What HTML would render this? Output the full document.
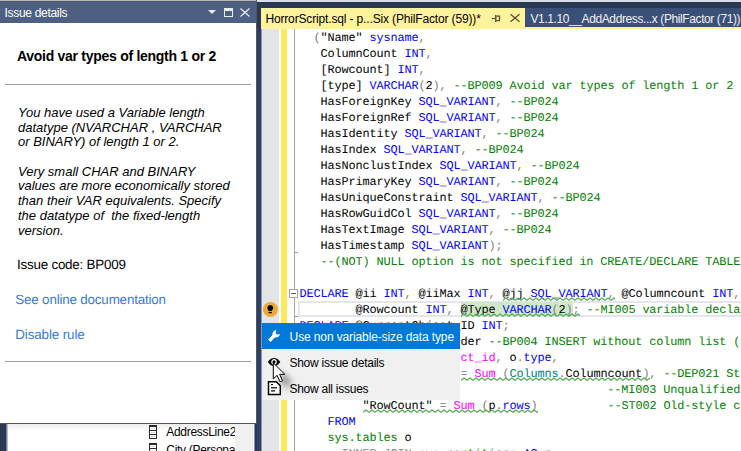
<!DOCTYPE html>
<html><head><meta charset="utf-8">
<style>
*{margin:0;padding:0;box-sizing:border-box}
html,body{width:741px;height:451px;overflow:hidden;background:#293955;position:relative;font-family:"Liberation Sans",sans-serif}
.a{position:absolute}
.code{position:absolute;left:299.6px;font-family:"Liberation Mono",monospace;font-size:11.9px;letter-spacing:-0.141px;line-height:16px;white-space:pre;color:#000;text-rendering:geometricPrecision}
.k{color:#0000ff}.g{color:#808080}.c{color:#008000}.m{color:#ff00ff}.t{color:#008080}
.pt{position:absolute;left:18px;white-space:pre;font:italic 13px/1 "Liberation Sans",sans-serif;color:#000}
.ui{position:absolute;white-space:pre;font-family:"Liberation Sans",sans-serif;line-height:1}
</style></head><body>
<!-- ===== editor ===== -->
<div class="a" style="left:257px;top:0;width:484px;height:2px;background:#d9dde8"></div>
<div class="a" style="left:261px;top:8px;width:264px;height:21px;background:#fff29d"></div>
<svg class="a" style="left:488px;top:10px" width="36" height="16" viewBox="0 0 36 16">
<path d="M3.8 8.5 H7.2" stroke="#5c5234" stroke-width="1.2"/>
<rect x="7" y="5" width="1.5" height="7" fill="#5c5234"/>
<path d="M8.3 6.2 H11.5 V10.6 H8.3" fill="none" stroke="#5c5234" stroke-width="1.3"/>
<path d="M22.5 4.3 L31.5 11.7 M31.5 4.3 L22.5 11.7" stroke="#5c5234" stroke-width="1.4"/>
</svg>
<div class="a" style="left:525px;top:8px;width:216px;height:19px;background:#3b5078"></div>
<div class="a" style="left:261px;top:27px;width:480px;height:2px;background:#fff29d"></div>
<div class="ui" style="left:265.4px;top:12.8px;font-size:12px;color:#000;letter-spacing:-0.15px">HorrorScript.sql - p...Six (PhilFactor (59))*</div>
<div class="ui" style="left:530.5px;top:13px;font-size:12px;color:#f0f0f0;letter-spacing:-0.4px">V1.1.10__AddAddress...x (PhilFactor (71))</div>
<div class="a" style="left:261px;top:29px;width:480px;height:422px;background:#fff"></div>
<div class="a" style="left:262px;top:29px;width:17px;height:422px;background:#e4e5e7"></div>
<div class="a" style="left:257px;top:29px;width:4px;height:422px;background:#2f4062"></div>
<div class="a" style="left:261px;top:29px;width:1px;height:422px;background:#8797b6"></div>
<div class="a" style="left:281px;top:29px;width:5.6px;height:422px;background:#ffe85a"></div>
<!-- outline -->
<div class="a" style="left:294px;top:29px;width:1px;height:260px;background:#a5a5a5"></div>
<div class="a" style="left:294px;top:252px;width:4px;height:1px;background:#a5a5a5"></div>
<div class="a" style="left:289px;top:289px;width:9px;height:9px;border:1px solid #a5a5a5;background:#fff"></div>
<div class="a" style="left:291px;top:293px;width:5px;height:1px;background:#606060"></div>
<div class="a" style="left:294px;top:298px;width:1px;height:153px;background:#a5a5a5"></div>
<div class="a" style="left:294px;top:316px;width:4px;height:1px;background:#a5a5a5"></div>
<!-- current line box -->
<div class="a" style="left:298px;top:301px;width:443px;height:16px;border:2px solid #e5e5ee;border-right:none"></div>
<!-- green highlight -->
<div class="a" style="left:460.6px;top:302px;width:112px;height:14px;background:#cfe8c9"></div>
<div class="code" style="top:30px">  <span class="g">(</span>"Name" <span class="k">sysname</span><span class="g">,</span></div>
<div class="code" style="top:46px">   ColumnCount <span class="k">INT</span><span class="g">,</span></div>
<div class="code" style="top:62px">   [Rowcount] <span class="k">INT</span><span class="g">,</span></div>
<div class="code" style="top:78px">   [type] <span class="k">VARCHAR</span><span class="g">(</span>2<span class="g">),</span> <span class="c">--BP009 Avoid var types of length 1 or 2</span></div>
<div class="code" style="top:94px">   HasForeignKey <span class="k">SQL_VARIANT</span><span class="g">,</span> <span class="c">--BP024</span></div>
<div class="code" style="top:110px">   HasForeignRef <span class="k">SQL_VARIANT</span><span class="g">,</span> <span class="c">--BP024</span></div>
<div class="code" style="top:126px">   HasIdentity <span class="k">SQL_VARIANT</span><span class="g">,</span> <span class="c">--BP024</span></div>
<div class="code" style="top:142px">   HasIndex <span class="k">SQL_VARIANT</span><span class="g">,</span> <span class="c">--BP024</span></div>
<div class="code" style="top:158px">   HasNonclustIndex <span class="k">SQL_VARIANT</span><span class="g">,</span> <span class="c">--BP024</span></div>
<div class="code" style="top:174px">   HasPrimaryKey <span class="k">SQL_VARIANT</span><span class="g">,</span> <span class="c">--BP024</span></div>
<div class="code" style="top:190px">   HasUniqueConstraint <span class="k">SQL_VARIANT</span><span class="g">,</span> <span class="c">--BP024</span></div>
<div class="code" style="top:206px">   HasRowGuidCol <span class="k">SQL_VARIANT</span><span class="g">,</span> <span class="c">--BP024</span></div>
<div class="code" style="top:222px">   HasTextImage <span class="k">SQL_VARIANT</span><span class="g">,</span> <span class="c">--BP024</span></div>
<div class="code" style="top:238px">   HasTimestamp <span class="k">SQL_VARIANT</span><span class="g">);</span></div>
<div class="code" style="top:254px">   <span class="c">--(NOT) NULL option is not specified in CREATE/DECLARE TABLE variables</span></div>
<div class="code" style="top:286px"><span class="k">DECLARE</span> @ii <span class="k">INT</span><span class="g">,</span> @iiMax <span class="k">INT</span><span class="g">,</span> @jj <span class="k">SQL_VARIANT</span><span class="g">,</span> @Columncount <span class="k">INT</span><span class="g">,</span></div>
<div class="code" style="top:302px">        @Rowcount <span class="k">INT</span><span class="g">,</span> @Type <span class="k">VARCHAR</span><span class="g">(</span>2<span class="g">);</span> <span class="c">--MI005 variable declarations</span></div>
<div class="code" style="top:318px"><span class="k">DECLARE</span> @CurrentObject_ID <span class="k">INT</span><span class="g">;</span></div>
<div class="code" style="top:334px">       INSERT INTO #Holder <span class="c">--BP004 INSERT without column list (BP004)</span></div>
<div class="code" style="top:350px">            <span class="k">SELECT</span> <span class="m">object_id</span><span class="g">,</span> o<span class="g">.</span><span class="k">type</span><span class="g">,</span></div>
<div class="code" style="top:366px">         "ColumnCount" <span class="g">=</span> <span class="m">Sum</span> <span class="g">(</span><span class="t">Columns</span><span class="g">.</span>Columncount<span class="g">),</span> <span class="c">--DEP021 Style</span></div>
<div class="code" style="top:382px">                                            <span class="c">--MI003 Unqualified column</span></div>
<div class="code" style="top:398px">         "RowCount" <span class="g">=</span> <span class="m">Sum</span> <span class="g">(</span>p<span class="g">.</span><span class="k">rows</span><span class="g">)</span>          <span class="c">--ST002 Old-style column</span></div>
<div class="code" style="top:414px">    <span class="k">FROM</span></div>
<div class="code" style="top:430px">    <span class="c">sys.tables</span> o</div>
<div class="code" style="top:446px">      <span class="g">INNER JOIN</span> <span class="c">sys.partitions</span> <span class="k">AS</span> p</div>
<svg class="a" style="left:502.6px;top:297.2px" width="112" height="4"><defs><pattern id="wv502297" width="6" height="4" patternUnits="userSpaceOnUse"><path d="M-3 0.9 L0 3.3 L3 0.9 L6 3.3 L9 0.9" fill="none" stroke="#55ad55" stroke-width="1.3" stroke-linejoin="round"/></pattern></defs><rect width="112" height="4" fill="url(#wv502297)"/></svg>
<svg class="a" style="left:460.6px;top:313.2px" width="119" height="4"><defs><pattern id="wv460313" width="6" height="4" patternUnits="userSpaceOnUse"><path d="M-3 0.9 L0 3.3 L3 0.9 L6 3.3 L9 0.9" fill="none" stroke="#55ad55" stroke-width="1.3" stroke-linejoin="round"/></pattern></defs><rect width="119" height="4" fill="url(#wv460313)"/></svg>
<svg class="a" style="left:460.6px;top:377.2px" width="189" height="4"><defs><pattern id="wv460377" width="6" height="4" patternUnits="userSpaceOnUse"><path d="M-3 0.9 L0 3.3 L3 0.9 L6 3.3 L9 0.9" fill="none" stroke="#55ad55" stroke-width="1.3" stroke-linejoin="round"/></pattern></defs><rect width="189" height="4" fill="url(#wv460377)"/></svg>
<svg class="a" style="left:362.6px;top:409.2px" width="175" height="4"><defs><pattern id="wv362409" width="6" height="4" patternUnits="userSpaceOnUse"><path d="M-3 0.9 L0 3.3 L3 0.9 L6 3.3 L9 0.9" fill="none" stroke="#55ad55" stroke-width="1.3" stroke-linejoin="round"/></pattern></defs><rect width="175" height="4" fill="url(#wv362409)"/></svg>

<!-- ===== panel ===== -->
<div class="a" style="left:0;top:0;width:257px;height:1px;background:#b4b6bc"></div>
<div class="a" style="left:0;top:1px;width:257px;height:1px;background:#555a66"></div>
<div class="a" style="left:0;top:2px;width:256px;height:21px;background:#4d6082"></div>
<div class="ui" style="left:4.5px;top:7px;font-size:12px;color:#fff;letter-spacing:-0.3px">Issue details</div>
<svg class="a" style="left:195px;top:0" width="62" height="23" viewBox="0 0 62 23">
<path d="M13 10 L21 10 L17 14 Z" fill="#e8ebf2"/>
<rect x="29.5" y="8.5" width="8" height="8" fill="none" stroke="#e8ebf2" stroke-width="1"/>
<rect x="29" y="8" width="9" height="3" fill="#e8ebf2"/>
<path d="M45.5 8.5 L54.5 16.5 M54.5 8.5 L45.5 16.5" stroke="#e8ebf2" stroke-width="1.3"/>
</svg>
<div class="a" style="left:0;top:23px;width:256px;height:400px;background:#fff"></div>
<div class="a" style="left:256px;top:0;width:1px;height:424px;background:#50555f"></div>
<div class="a" style="left:0;top:423px;width:257px;height:1px;background:#555"></div>
<div class="ui" style="left:17px;top:49.4px;font-weight:bold;font-size:14px;color:#000;letter-spacing:-0.28px">Avoid var types of length 1 or 2</div>
<div class="a" style="left:5px;top:84px;width:246px;height:1px;background:#a0a0a0"></div>
<div class="a" style="left:5px;top:361px;width:246px;height:1px;background:#a0a0a0"></div>
<div class="pt" style="top:106px">You have used a Variable length</div>
<div class="pt" style="top:121px">datatype (NVARCHAR , VARCHAR</div>
<div class="pt" style="top:135px">or BINARY) of length 1 or 2.</div>
<div class="pt" style="top:165px">Very small CHAR and BINARY</div>
<div class="pt" style="top:179px">values are more economically stored</div>
<div class="pt" style="top:194px">than their VAR equivalents. Specify</div>
<div class="pt" style="top:209px">the datatype of  the fixed-length</div>
<div class="pt" style="top:224px">version.</div>
<div class="ui" style="left:17px;top:257.8px;font-size:13.4px;letter-spacing:-0.22px;text-rendering:geometricPrecision;color:#000">Issue code: BP009</div>
<div class="ui" style="left:15.3px;top:293px;font-size:13.4px;letter-spacing:-0.18px;text-rendering:geometricPrecision;color:#3a7ad8">See online documentation</div>
<div class="ui" style="left:15.3px;top:328.2px;font-size:13.4px;letter-spacing:-0.12px;text-rendering:geometricPrecision;color:#3a7ad8">Disable rule</div>
<!-- ===== object explorer below panel ===== -->
<div class="a" style="left:6px;top:424px;width:1px;height:27px;background:#6b7ea0"></div><div class="a" style="left:7px;top:424px;width:1px;height:27px;background:#b4bccc"></div>
<div class="a" style="left:8px;top:424px;width:227px;height:27px;background:#fff"></div>
<div class="a" style="left:235px;top:424px;width:18px;height:27px;background:#f0f0f0"></div>
<div class="a" style="left:8px;top:424px;width:227px;height:7px;background:linear-gradient(#ececec,#fff)"></div>
<div class="a" style="left:253px;top:424px;width:1px;height:27px;background:#f4f4f4"></div>
<div class="a" style="left:254px;top:424px;width:1px;height:27px;background:#8796b4"></div>
<svg class="a" style="left:149px;top:425px" width="8" height="26" viewBox="0 0 8 26">
<g fill="#fff" stroke="#2a2a2a" stroke-width="1">
<rect x="0.5" y="0.5" width="7" height="13"/>
<path d="M0.5 5.5 H7.5 M0.5 9.5 H7.5"/>
<rect x="0.5" y="18.5" width="7" height="13"/>
<path d="M0.5 23.5 H7.5"/>
</g>
<rect x="0" y="0" width="8" height="2" fill="#2a2a2a"/>
<rect x="0" y="18" width="8" height="2" fill="#2a2a2a"/>
<path d="M2 3.5 H6 M2 7.5 H6 M2 11.5 H6 M2 21.5 H6" stroke="#d8d8d8" stroke-width="1"/>
</svg>
<div class="ui" style="left:166.3px;top:426px;font-size:12px;color:#000;letter-spacing:-0.3px;width:69px;overflow:hidden">AddressLine2</div>
<div class="ui" style="left:166.3px;top:444px;font-size:12px;color:#000;letter-spacing:-0.3px;width:69px;overflow:hidden">City (Persona</div>
<svg class="a" style="left:260px;top:300px" width="22" height="20" viewBox="0 0 22 20">
<circle cx="10.4" cy="9.5" r="7.5" fill="#f0a830"/>
<path d="M10.2 4.8 C12.3 4.8 13.5 6.2 13.5 7.9 C13.5 9.4 12.4 10.2 11.9 11.3 L8.5 11.3 C8 10.2 7 9.4 7 7.9 C7 6.2 8.2 4.8 10.2 4.8 Z" fill="#000" stroke="#fff3dc" stroke-width="0.5"/>
<rect x="8.6" y="11.9" width="3.2" height="1.3" fill="#000"/>
</svg>
<!-- ===== popup ===== -->
<div class="a" style="left:262px;top:323px;width:198px;height:77px;background:#f0f0f0"></div>
<div class="a" style="left:262px;top:323px;width:198px;height:26px;background:#0078d7"></div>
<div class="ui" style="left:289.6px;top:330.8px;font-size:12px;color:#fff;letter-spacing:-0.12px">Use non variable-size data type</div>
<div class="ui" style="left:289.4px;top:357px;font-size:12px;color:#000;letter-spacing:-0.25px">Show issue details</div>
<div class="ui" style="left:289.4px;top:383px;font-size:12px;color:#000;letter-spacing:-0.25px">Show all issues</div>
<svg class="a" style="left:264px;top:326px" width="22" height="20" viewBox="0 0 22 20">
<path d="M5.3 14.9 L10.3 9.6" stroke="#fff" stroke-width="3.4" stroke-linecap="butt"/>
<path d="M12.2 4.0 C10.0 4.4 8.4 6.2 8.4 8.3 C8.4 10.0 9.6 11.2 11.2 11.4 C13.5 11.6 15.6 10.4 15.9 7.9 L13.7 8.6 C12.6 8.4 11.7 7.5 11.8 6.4 Z" fill="#fff"/>
</svg>
<svg class="a" style="left:264px;top:352px" width="24" height="48" viewBox="0 0 24 48">
<path d="M3.8 10 C6 6.8 8 6 10 6 C12 6 14 6.8 16.3 10 C14 13.2 12 14 10 14 C8 14 6 13.2 3.8 10 Z" fill="#000"/>
<circle cx="10" cy="9.9" r="2.2" fill="none" stroke="#fff" stroke-width="1.2"/>
<circle cx="10" cy="9.9" r="1" fill="#000"/>
<path d="M4.5 29.8 H12.3 L16.3 33.8 V42.5 H4.5 Z" fill="#fff" stroke="#000" stroke-width="1.5"/>
<rect x="7" y="32" width="2" height="1.2" fill="#000"/>
<rect x="7" y="35.2" width="6" height="1.2" fill="#000"/>
<rect x="7" y="38.3" width="4" height="1.2" fill="#000"/>
</svg>
<svg class="a" style="left:261.5px;top:353.2px" width="40" height="40" viewBox="0 0 40 40">
<defs><filter id="sh" x="-50%" y="-50%" width="200%" height="200%"><feGaussianBlur stdDeviation="3.2"/></filter></defs>
<path d="M14.3 13 L14.3 29 L18.3 25.3 L21.3 32 L23.8 31 L20.8 24.5 L26 24.5 Z" fill="#000" opacity="0.42" filter="url(#sh)" transform="translate(5 5)"/>
<path d="M11.3 9.9 L11.3 25.9 L15.1 22.3 L18 28.8 L20.5 27.8 L17.6 21.3 L22.8 21.3 Z" fill="#fff" stroke="#000" stroke-width="1" stroke-linejoin="miter"/>
</svg>
</body></html>
